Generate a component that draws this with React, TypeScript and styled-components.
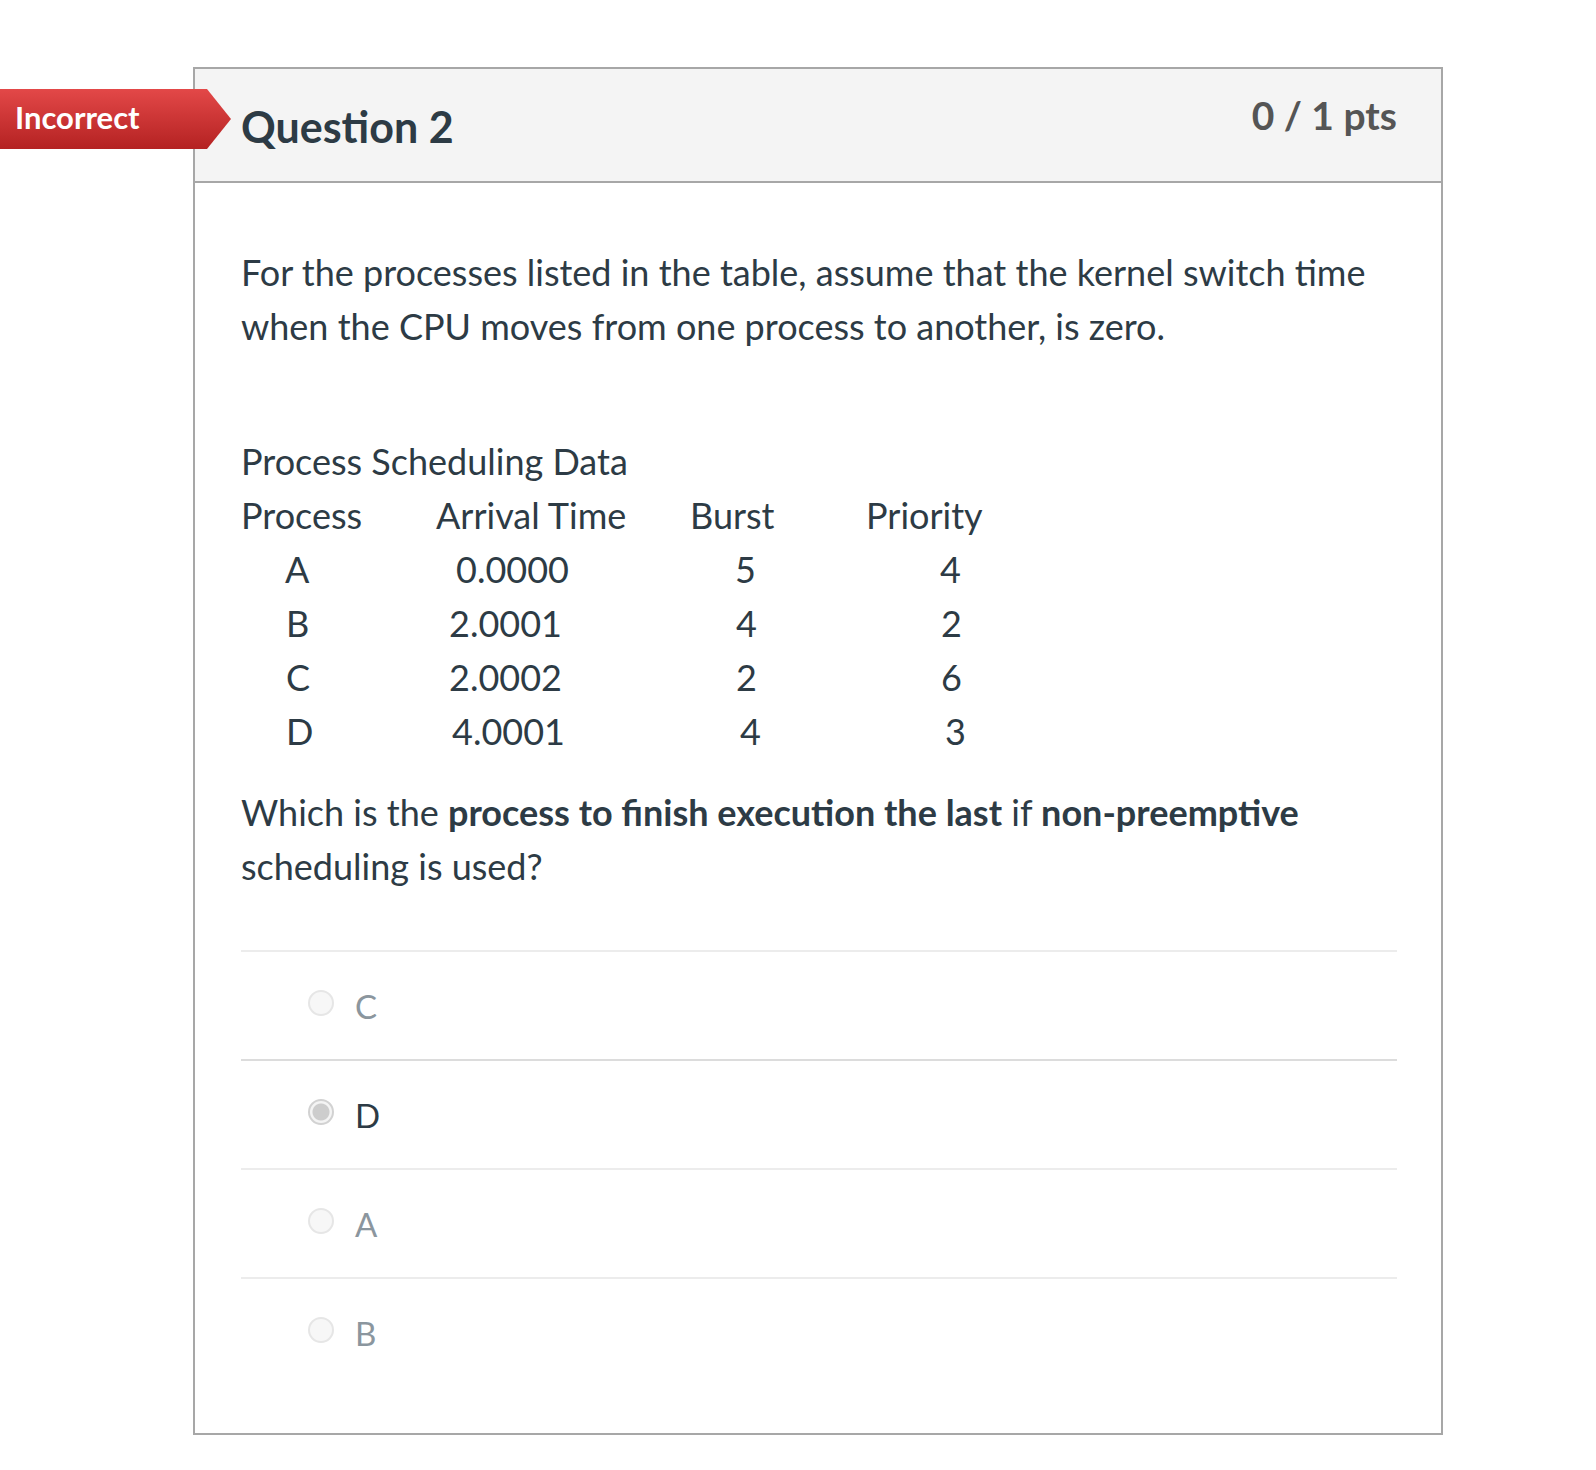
import React from "react";
import styled, { createGlobalStyle } from "styled-components";

const Global = createGlobalStyle`
  html, body { margin: 0; padding: 0; background: #ffffff; }
  body { font-family: Lato, "Open Sans", sans-serif; color: #2d3b45; }
`;

const Page = styled.div`
  padding: 67px 0 36px 193px;
`;

const Card = styled.section`
  position: relative;
  width: 1250px;
  box-sizing: border-box;
  border: 2px solid #a7a7a7;
  background: #fff;
`;

const Badge = styled.div`
  position: absolute;
  left: -195px;
  top: 20px;
  width: 231px;
  height: 60px;
  box-sizing: border-box;
  padding-left: 15px;
  display: flex;
  align-items: center;
  background: linear-gradient(#e34848, #b42222);
  clip-path: polygon(0 0, 207px 0, 231px 30px, 207px 60px, 0 60px);
  color: #fff;
  font-size: 31px;
  font-weight: 700;
  padding-bottom: 4px;
`;

const Header = styled.header`
  display: flex;
  justify-content: space-between;
  align-items: flex-start;
  background: #f4f4f4;
  border-bottom: 2px solid #a7a7a7;
  height: 112px;
  padding: 0 44px 0 46px;
`;

const Title = styled.h2`
  margin: 28px 0 0;
  font-size: 43px;
  font-weight: 700;
  color: #2d3b45;
  line-height: 60px;
`;

const Points = styled.div`
  margin-top: 18px;
  font-size: 39px;
  font-weight: 700;
  color: #555555;
  line-height: 56px;
`;

const Body = styled.div`
  padding: 62px 44px 47px 46px;
  font-size: 36px;
  line-height: 54px;
`;

const Para = styled.p<{ $gap?: number }>`
  margin: 0 0 ${(p) => p.$gap ?? 0}px;
`;

const DataTable = styled.div`
  display: grid;
  grid-template-columns: 195px 254px 176px 200px;
  margin-bottom: 27px;
`;

const Cell = styled.div<{ $indent?: number }>`
  padding-left: ${(p) => p.$indent ?? 0}px;
  white-space: pre;
`;

const Answers = styled.div`
  margin-top: 57px;
`;

const AnswerRow = styled.div<{ $strong?: boolean }>`
  display: flex;
  align-items: center;
  height: 107px;
  border-top: 2px solid ${(p) => (p.$strong ? "#dcdcdc" : "#ececec")};
  padding-left: 67px;
  box-sizing: content-box;
`;

const Radio = styled.span<{ $checked?: boolean }>`
  width: 26px;
  height: 26px;
  box-sizing: border-box;
  border-radius: 50%;
  border: 2px solid ${(p) => (p.$checked ? "#d2d2d2" : "#e6e6e6")};
  background: ${(p) => (p.$checked ? "radial-gradient(circle, #cdcdcd 0 8px, #f4f4f4 9px)" : "#f7f7f7")};
  margin-right: 21px;
  margin-top: -6px;
`;

const AnswerText = styled.span<{ $checked?: boolean }>`
  font-size: 33px;
  color: ${(p) => (p.$checked ? "#2d3b45" : "#8b969e")};
`;

const rows = [
  ["A", "0.0000", "5", "4", 44, 20, 45, 74],
  ["B", "2.0001", "4", "2", 45, 13, 46, 75],
  ["C", "2.0002", "2", "6", 45, 13, 46, 75],
  ["D", "4.0001", "4", "3", 45, 16, 50, 79],
] as const;

const answers = [
  { label: "C", checked: false },
  { label: "D", checked: true },
  { label: "A", checked: false },
  { label: "B", checked: false },
];

export default function App() {
  return (
    <>
      <Global />
      <Page>
        <Card>
          <Badge>Incorrect</Badge>
          <Header>
            <Title>Question 2</Title>
            <Points>0 / 1 pts</Points>
          </Header>
          <Body>
            <Para $gap={81}>
              For the processes listed in the table, assume that the kernel switch time
              when the CPU moves from one process to another, is zero.
            </Para>
            <Para>Process Scheduling Data</Para>
            <DataTable>
              <Cell>Process</Cell>
              <Cell>Arrival Time</Cell>
              <Cell>Burst</Cell>
              <Cell>Priority</Cell>
              {rows.map((r) => (
                <React.Fragment key={r[0]}>
                  <Cell $indent={r[4]}>{r[0]}</Cell>
                  <Cell $indent={r[5]}>{r[1]}</Cell>
                  <Cell $indent={r[6]}>{r[2]}</Cell>
                  <Cell $indent={r[7]}>{r[3]}</Cell>
                </React.Fragment>
              ))}
            </DataTable>
            <Para>
              Which is the <b>process to finish execution the last</b> if <b>non-preemptive</b>
              {" "}scheduling is used?
            </Para>
            <Answers>
              {answers.map((a, i) => (
                <AnswerRow key={a.label} $strong={i === 1}>
                  <Radio $checked={a.checked} />
                  <AnswerText $checked={a.checked}>{a.label}</AnswerText>
                </AnswerRow>
              ))}
            </Answers>
          </Body>
        </Card>
      </Page>
    </>
  );
}
